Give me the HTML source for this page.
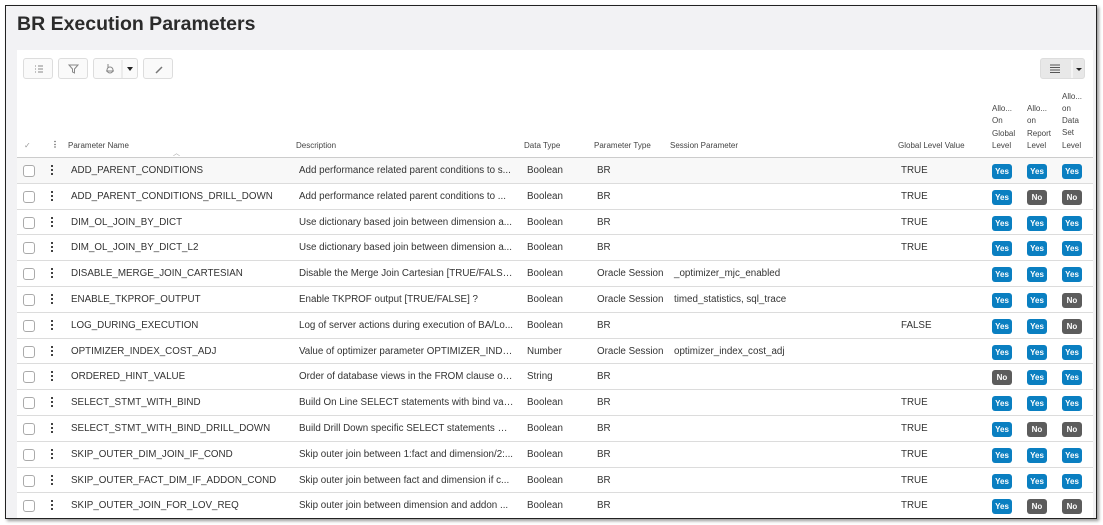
<!DOCTYPE html>
<html><head><meta charset="utf-8"><style>
*{margin:0;padding:0;box-sizing:border-box}
body{width:1103px;height:525px;background:#fff;font-family:"Liberation Sans",sans-serif;position:relative;overflow:hidden;color:#333}
.frame{position:absolute;left:5px;top:5px;width:1092px;height:514px;border:1px solid #222;background:#f2f2f4;box-shadow:2px 2px 3px #999;overflow:hidden}
h1{position:absolute;left:11px;top:7px;font-size:19.5px;font-weight:bold;color:#2b2b2b}
.panel{position:absolute;left:11px;top:44px;width:1076px;height:470px;background:#fff}
.btn{position:absolute;top:8px;height:21px;border:1px solid #ddd;border-radius:3px;background:#fafafa}
.a{position:absolute;white-space:nowrap}
.hd{font-size:8px;color:#444}
.row{position:absolute;left:0;width:1076px;height:26px;border-top:1px solid #dcdcdc;font-size:9.8px;color:#333}
.row .a{top:7px}
.cb{position:absolute;left:6px;top:7px;width:12px;height:12px;border:1px solid #aaa;border-radius:3px;background:#fff}
.dots{position:absolute;left:34px;top:6px;width:2px;height:12px;background:radial-gradient(circle,#333 1px,transparent 1.2px) 0 0/2px 4px}
.b{position:absolute;top:6px;width:20px;height:15px;border-radius:3px;color:#fff;font-size:8px;font-weight:bold;text-align:center;line-height:15px}
.y{background:#0a7fc1}.n{background:#5c5c5c}
.desc{width:215px;overflow:hidden;text-overflow:ellipsis}
</style></head><body>
<div class="frame">
<h1>BR Execution Parameters</h1>
<div class="panel">
<div class="btn" style="left:6px;width:30px"><svg width="30" height="20" viewBox="0 0 30 20"><g stroke="#888" stroke-width="1"><path d="M11 7h1M11 10h1M11 13h1M14 7h5M14 10h5M14 13h5"/></g></svg></div>
<div class="btn" style="left:41px;width:30px"><svg width="30" height="20"><path d="M10 6h9l-3.5 4v4l-2-1v-3z" fill="none" stroke="#888"/></svg></div>
<div class="btn" style="left:76px;width:45px"><svg width="45" height="20"><circle cx="16" cy="11" r="3" fill="none" stroke="#888"/><path d="M14 5v4M12 12h8" stroke="#888"/><path d="M33 8h6l-3 4z" fill="#222"/><path d="M28 1v18" stroke="#ddd"/></svg></div>
<div class="btn" style="left:126px;width:30px"><svg width="30" height="20"><path d="M12 14l6-6" stroke="#777" stroke-width="1.5"/></svg></div>
<div class="btn" style="left:1023px;width:45px;background:#e8e8e8"><svg width="45" height="20"><path d="M9 6h10M9 8.5h10M9 11h10M9 13.5h10" stroke="#555"/><path d="M31 1v18" stroke="#fff"/><path d="M35 9h6l-3 3z" fill="#222"/></svg></div>

<div class="a hd" style="left:7px;top:91px;color:#999">✓</div>
<div class="a hd" style="left:34px;top:90px;font-weight:bold">⋮</div>
<div class="a hd" style="left:51px;top:91px">Parameter Name</div>
<div class="a hd" style="left:156px;top:98px;color:#999;font-size:7px">︿</div>
<div class="a hd" style="left:279px;top:91px">Description</div>
<div class="a hd" style="left:507px;top:91px">Data Type</div>
<div class="a hd" style="left:577px;top:91px">Parameter Type</div>
<div class="a hd" style="left:653px;top:91px">Session Parameter</div>
<div class="a hd" style="left:881px;top:91px">Global Level Value</div>
<div class="a hd" style="left:975px;top:53px;line-height:12.3px;width:30px">Allo...<br>On<br>Global<br>Level</div>
<div class="a hd" style="left:1010px;top:53px;line-height:12.3px;width:30px">Allo...<br>on<br>Report<br>Level</div>
<div class="a hd" style="left:1045px;top:40.5px;line-height:12.3px;width:30px">Allo...<br>on<br>Data<br>Set<br>Level</div>

<div id="rows"></div>
</div></div>
<script>
var d=[
["ADD_PARENT_CONDITIONS","Add performance related parent conditions to s...","Boolean","BR","","TRUE","yyy"],
["ADD_PARENT_CONDITIONS_DRILL_DOWN","Add performance related parent conditions to ...","Boolean","BR","","TRUE","ynn"],
["DIM_OL_JOIN_BY_DICT","Use dictionary based join between dimension a...","Boolean","BR","","TRUE","yyy"],
["DIM_OL_JOIN_BY_DICT_L2","Use dictionary based join between dimension a...","Boolean","BR","","TRUE","yyy"],
["DISABLE_MERGE_JOIN_CARTESIAN","Disable the Merge Join Cartesian [TRUE/FALSE] ?","Boolean","Oracle Session","_optimizer_mjc_enabled","","yyy"],
["ENABLE_TKPROF_OUTPUT","Enable TKPROF output [TRUE/FALSE] ?","Boolean","Oracle Session","timed_statistics, sql_trace","","yyn"],
["LOG_DURING_EXECUTION","Log of server actions during execution of BA/Lo...","Boolean","BR","","FALSE","yyn"],
["OPTIMIZER_INDEX_COST_ADJ","Value of optimizer parameter OPTIMIZER_INDE...","Number","Oracle Session","optimizer_index_cost_adj","","yyy"],
["ORDERED_HINT_VALUE","Order of database views in the FROM clause of ...","String","BR","","","nyy"],
["SELECT_STMT_WITH_BIND","Build On Line SELECT statements with bind vari...","Boolean","BR","","TRUE","yyy"],
["SELECT_STMT_WITH_BIND_DRILL_DOWN","Build Drill Down specific SELECT statements wit...","Boolean","BR","","TRUE","ynn"],
["SKIP_OUTER_DIM_JOIN_IF_COND","Skip outer join between 1:fact and dimension/2:...","Boolean","BR","","TRUE","yyy"],
["SKIP_OUTER_FACT_DIM_IF_ADDON_COND","Skip outer join between fact and dimension if c...","Boolean","BR","","TRUE","yyy"],
["SKIP_OUTER_JOIN_FOR_LOV_REQ","Skip outer join between dimension and addon ...","Boolean","BR","","TRUE","ynn"]];
var h="";
d.forEach(function(r,i){
var t=107+i*25.8;
h+='<div class="row" style="top:'+t+'px'+(i==0?';background:#f8f8f8;border-top-color:#ccc':'')+'"><div class="cb"></div><div class="dots"></div>'+
'<div class="a" style="left:54px">'+r[0]+'</div><div class="a desc" style="left:282px">'+r[1]+'</div>'+
'<div class="a" style="left:510px">'+r[2]+'</div><div class="a" style="left:580px">'+r[3]+'</div>'+
'<div class="a" style="left:657px">'+r[4]+'</div><div class="a" style="left:884px">'+r[5]+'</div>';
var xs=[975,1010,1045];
for(var k=0;k<3;k++){var c=r[6][k];h+='<div class="b '+c+'" style="left:'+xs[k]+'px">'+(c=="y"?"Yes":"No")+'</div>';}
h+='</div>';});
document.getElementById("rows").innerHTML=h;
</script>
</body></html>
